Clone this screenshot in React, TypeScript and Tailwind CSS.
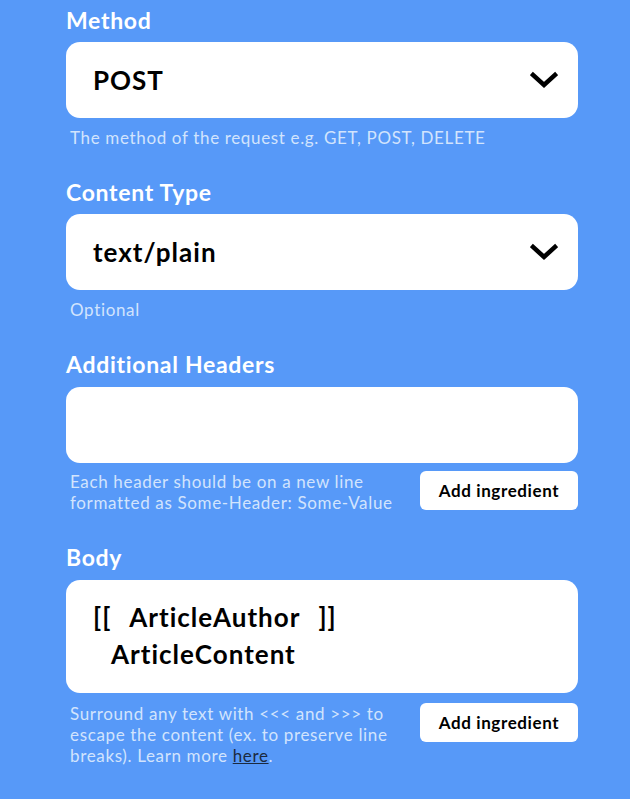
import React from "react";

const FONT = "font-['Lato','Open_Sans',sans-serif]";

function Chevron() {
  return (
    <svg width="28" height="18" viewBox="0 0 28 18" className="shrink-0">
      <polyline
        points="3,4 14,14 25,4"
        fill="none"
        stroke="#000"
        strokeWidth="4.5"
        strokeLinecap="square"
      />
    </svg>
  );
}

function Label({ children }: { children: React.ReactNode }) {
  return (
    <h3 className="h-[28px] text-[23px] font-bold leading-[28px] tracking-[0.7px] text-white">
      {children}
    </h3>
  );
}

function Help({ children }: { children: React.ReactNode }) {
  return (
    <p className="px-1 text-[17px] leading-[21px] tracking-[0.65px] text-[#d2e4fd]">
      {children}
    </p>
  );
}

function SelectField({
  label,
  value,
  help,
}: {
  label: string;
  value: string;
  help: string;
}) {
  return (
    <section>
      <Label>{label}</Label>
      <div className="mt-2 flex h-[76px] items-center justify-between rounded-[14px] bg-white pl-[27px] pr-[20px]">
        <span className="text-[26px] font-bold tracking-[1px] text-black">
          {value}
        </span>
        <Chevron />
      </div>
      <div className="mt-[9px]">
        <Help>{help}</Help>
      </div>
    </section>
  );
}

function AddIngredient() {
  return (
    <button className="h-[39px] w-[158px] shrink-0 rounded-[6px] bg-white text-[17px] font-bold tracking-[0.6px] text-black">
      Add ingredient
    </button>
  );
}

export default function App() {
  return (
    <div className={`${FONT} min-h-[799px] bg-[#5799f8] pl-[66px] pr-[52px] pt-[6px]`}>
      <div className="flex flex-col gap-[30px]">
        <SelectField
          label="Method"
          value="POST"
          help="The method of the request e.g. GET, POST, DELETE"
        />
        <SelectField label="Content Type" value="text/plain" help="Optional" />

        <section>
          <Label>Additional Headers</Label>
          <div className="mt-[9px] h-[76px] rounded-[14px] bg-white" />
          <div className="mt-[8px] flex items-start justify-between gap-4">
            <Help>
              Each header should be on a new line
              <br />
              formatted as Some-Header: Some-Value
            </Help>
            <AddIngredient />
          </div>
        </section>

        <section>
          <Label>Body</Label>
          <div className="mt-[9px] h-[113px] rounded-[14px] bg-white px-[27px] pt-[19px] text-[26px] font-bold leading-[37px] tracking-[1px] text-black">
            <div>
              [[<span className="ml-[18px] mr-[18px]">ArticleAuthor</span>]]
            </div>
            <div className="pl-[18px]">ArticleContent</div>
          </div>
          <div className="mt-[10px] flex items-start justify-between gap-4">
            <Help>
              Surround any text with &lt;&lt;&lt; and &gt;&gt;&gt; to
              <br />
              escape the content (ex. to preserve line
              <br />
              breaks). Learn more{" "}
              <a href="#" className="text-[#1b2a40] underline">
                here
              </a>
              .
            </Help>
            <AddIngredient />
          </div>
        </section>
      </div>
    </div>
  );
}
